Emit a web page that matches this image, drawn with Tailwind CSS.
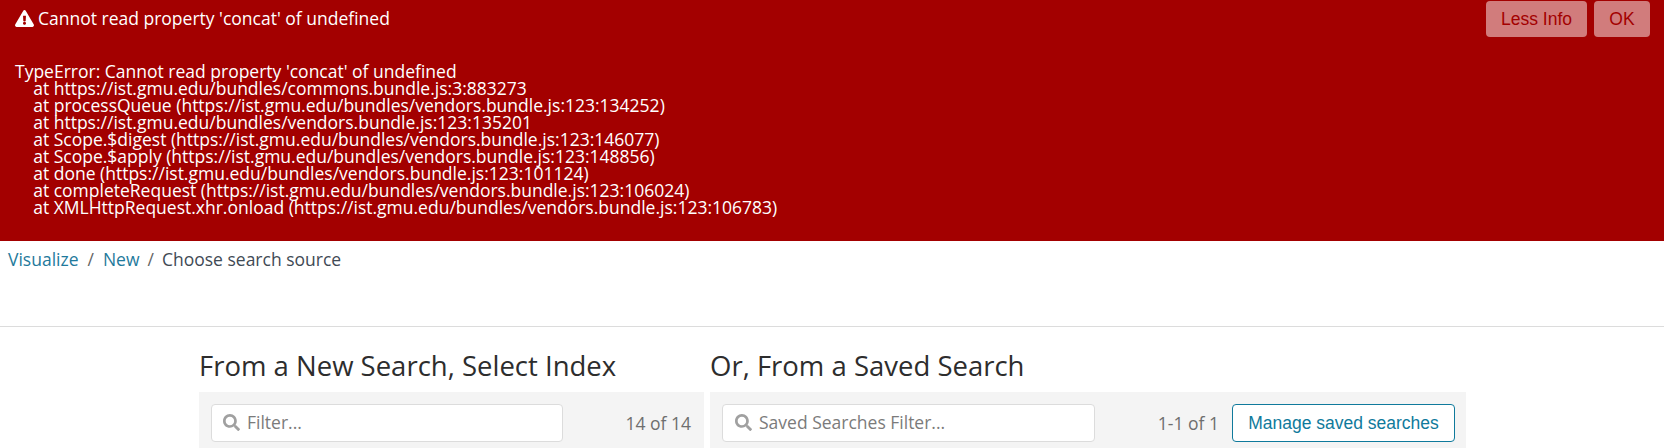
<!DOCTYPE html>
<html lang="en">
<head>
    <meta charset="UTF-8">
    <title>Visualize</title>
    <script src="https://cdn.jsdelivr.net/npm/@tailwindcss/browser@4"></script>
</head>
<body class="bg-white h-[448px] overflow-hidden font-['Open_Sans',sans-serif] text-[#2d2d2d]">

    <!-- error banner -->
    <div class="bg-[#a30000] text-white h-[241px] pl-[15px] pr-[14px] flex justify-between items-start">
        <div>
            <div class="flex items-center h-[37px] text-[17.5px]">
                <svg class="w-[19px] h-[17px] mr-[4px]" viewBox="0 0 576 512"><path fill="#fff" d="M569.517 440.013C587.975 472.007 564.806 512 527.94 512H48.054c-36.937 0-59.999-40.055-41.577-71.987L246.423 24.995c18.467-32.009 64.720-31.951 83.154 0l239.94 415.018zM288 354c-25.405 0-46 20.595-46 46s20.595 46 46 46 46-20.595 46-46-20.595-46-46-46zm-43.673-165.346l7.418 136c.347 6.364 5.609 11.346 11.982 11.346h48.546c6.373 0 11.635-4.982 11.982-11.346l7.418-136c.375-6.874-5.098-12.654-11.982-12.654h-63.383c-6.884 0-12.356 5.780-11.981 12.654z"/></svg>
                <span>Cannot read property 'concat' of undefined</span>
            </div>
            <pre class="mt-[26px] font-['Open_Sans',sans-serif] text-[17.5px] leading-[17px]">TypeError: Cannot read property 'concat' of undefined
    at https://ist.gmu.edu/bundles/commons.bundle.js:3:883273
    at processQueue (https://ist.gmu.edu/bundles/vendors.bundle.js:123:134252)
    at https://ist.gmu.edu/bundles/vendors.bundle.js:123:135201
    at Scope.$digest (https://ist.gmu.edu/bundles/vendors.bundle.js:123:146077)
    at Scope.$apply (https://ist.gmu.edu/bundles/vendors.bundle.js:123:148856)
    at done (https://ist.gmu.edu/bundles/vendors.bundle.js:123:101124)
    at completeRequest (https://ist.gmu.edu/bundles/vendors.bundle.js:123:106024)
    at XMLHttpRequest.xhr.onload (https://ist.gmu.edu/bundles/vendors.bundle.js:123:106783)</pre>
        </div>
        <div class="flex gap-[7px] pt-px font-['Liberation_Sans',sans-serif] text-[17.5px]">
            <button class="w-[101px] h-[36px] rounded-[4px] bg-[#d17c7c] text-[#a30000]">Less Info</button>
            <button class="w-[56px] h-[36px] rounded-[4px] bg-[#d17c7c] text-[#a30000]">OK</button>
        </div>
    </div>

    <!-- breadcrumb -->
    <div class="h-[86px] border-b border-[#dcdcdc] pl-[8px] pt-[6px] text-[17.5px] leading-[24px] flex items-start">
        <a class="text-[#1f7a9c]">Visualize</a>
        <span class="mx-[9px] text-[#666]">/</span>
        <a class="text-[#1f7a9c]">New</a>
        <span class="mx-[8px] text-[#666]">/</span>
        <span class="text-[#3f4a55]">Choose search source</span>
    </div>

    <!-- search source chooser -->
    <div class="ml-[199px] w-[1267px] flex gap-[6px] pt-[21px]">
        <div class="w-[505px]">
            <h2 class="text-[27.5px] leading-[36px] h-[44px]">From a New Search, Select Index</h2>
            <div class="bg-[#f4f4f4] h-[56px] pl-[12px] pr-[13px] pt-[12px] flex items-start justify-between">
                <div class="w-[352px] h-[38px] pb-px bg-white border border-[#dcdcdc] rounded-[4px] flex items-center pl-[11px] text-[17.5px] text-[#7b7b7b]">
                    <svg class="w-[17px] h-[17px] mr-[7px]" viewBox="0 0 512 512"><path fill="#a0a0a0" d="M505 442.700L405.300 343c-4.500-4.500-10.600-7-17-7H372c27.600-35.300 44-79.700 44-128C416 93.100 322.900 0 208 0S0 93.100 0 208s93.100 208 208 208c48.300 0 92.700-16.400 128-44v16.300c0 6.400 2.500 12.500 7 17l99.700 99.700c9.400 9.400 24.600 9.400 33.900 0l28.300-28.300c9.400-9.400 9.400-24.600.1-34zM208 336c-70.700 0-128-57.200-128-128 0-70.700 57.200-128 128-128 70.700 0 128 57.200 128 128 0 70.700-57.200 128-128 128z"/></svg>
                    <span>Filter...</span>
                </div>
                <span class="text-[17.5px] leading-[38px] text-[#6e6e6e]">14 of 14</span>
            </div>
        </div>
        <div class="flex-1">
            <h2 class="text-[27.5px] leading-[36px] h-[44px]">Or, From a Saved Search</h2>
            <div class="bg-[#f4f4f4] h-[56px] pl-[12px] pr-[11px] pt-[12px] flex items-start">
                <div class="w-[373px] h-[38px] pb-px bg-white border border-[#dcdcdc] rounded-[4px] flex items-center pl-[12px] text-[17.5px] text-[#7b7b7b]">
                    <svg class="w-[17px] h-[17px] mr-[7px]" viewBox="0 0 512 512"><path fill="#a0a0a0" d="M505 442.700L405.300 343c-4.500-4.500-10.600-7-17-7H372c27.600-35.300 44-79.700 44-128C416 93.100 322.900 0 208 0S0 93.100 0 208s93.100 208 208 208c48.300 0 92.700-16.400 128-44v16.300c0 6.400 2.500 12.500 7 17l99.700 99.700c9.400 9.400 24.600 9.400 33.900 0l28.300-28.300c9.400-9.400 9.400-24.600.1-34zM208 336c-70.700 0-128-57.200-128-128 0-70.700 57.200-128 128-128 70.700 0 128 57.200 128 128 0 70.700-57.200 128-128 128z"/></svg>
                    <span>Saved Searches Filter...</span>
                </div>
                <span class="ml-auto mr-[13px] text-[17.5px] leading-[38px] text-[#6e6e6e]">1-1 of 1</span>
                <button class="w-[223px] h-[38px] border border-[#0f7a9c] rounded-[4px] bg-white text-[#0f7a9c] font-['Liberation_Sans',sans-serif] text-[17.5px]">Manage saved searches</button>
            </div>
        </div>
    </div>
</body>
</html>
